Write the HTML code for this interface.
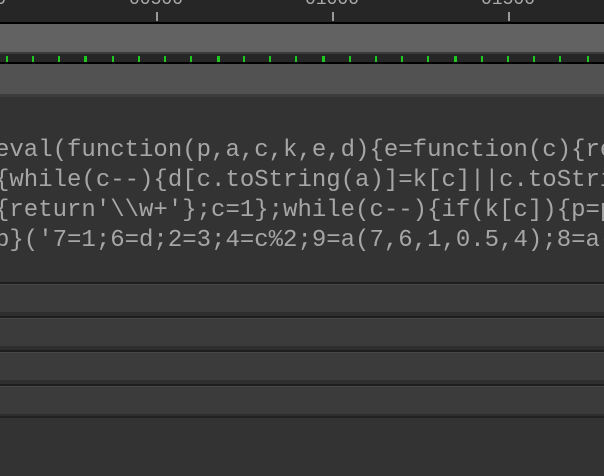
<!DOCTYPE html><html><head><style>
body{margin:0;width:604px;height:476px;overflow:hidden;background:#333;position:relative;font-family:"Liberation Mono",monospace}
div{position:absolute}
.lbl{color:#a8a8a8;font-size:18px;top:-9px;line-height:18px}
.t{width:2px;background:#9a9a9a;top:12px;height:9px}
.g{top:56px;height:6px;width:2px;background:#1ec81e}
.code{left:-5px;color:#a6a6a6;font-size:24px;line-height:30px;top:136px;white-space:pre}
.row{left:0;width:604px;height:34px}
</style></head><body>
<div style="left:0;top:0;width:604px;height:22px;background:#262626"></div>
<div class="lbl" style="left:-48px">00000</div>
<div class="lbl" style="left:129px">00500</div>
<div class="lbl" style="left:305px">01000</div>
<div class="lbl" style="left:481px">01500</div>
<div class="t" style="left:156px"></div><div class="t" style="left:332px"></div><div class="t" style="left:508px"></div>
<div style="left:0;top:22px;width:604px;height:2px;background:#000"></div>
<div style="left:0;top:24px;width:604px;height:28px;background:#626262"></div>
<div style="left:0;top:52px;width:604px;height:2px;background:#3a3a3a"></div>
<div style="left:0;top:54px;width:604px;height:8px;background:#262626"></div>
<div class="g" style="left:6px"></div><div class="g" style="left:32px"></div><div class="g" style="left:58px"></div><div class="g" style="left:84px;width:3px"></div><div class="g" style="left:112px"></div><div class="g" style="left:138px"></div><div class="g" style="left:164px"></div><div class="g" style="left:190px"></div><div class="g" style="left:217px;width:3px"></div><div class="g" style="left:243px"></div><div class="g" style="left:269px"></div><div class="g" style="left:295px"></div><div class="g" style="left:322px;width:3px"></div><div class="g" style="left:349px"></div><div class="g" style="left:375px"></div><div class="g" style="left:401px"></div><div class="g" style="left:427px"></div><div class="g" style="left:454px;width:3px"></div><div class="g" style="left:481px"></div><div class="g" style="left:507px"></div><div class="g" style="left:533px"></div><div class="g" style="left:559px"></div><div class="g" style="left:587px"></div>
<div style="left:0;top:62px;width:604px;height:2px;background:#000"></div>
<div style="left:0;top:64px;width:604px;height:30px;background:#525252"></div>
<div style="left:0;top:94px;width:604px;height:3px;background:#3c3c3c"></div>
<div class="code">eval(function(p,a,c,k,e,d){e=function(c){re
{while(c--){d[c.toString(a)]=k[c]||c.toStri
{return'\\w+'};c=1};while(c--){if(k[c]){p=p
b}('7=1;6=d;2=3;4=c%2;9=a(7,6,1,0.5,4);8=a(</div>
<div class="row" style="top:282px;background:linear-gradient(#1e1e1e 0,#1e1e1e 2px,#474747 2px,#474747 3px,#3b3b3b 3px,#3b3b3b 30px,#2e2e2e 30px)"></div>
<div class="row" style="top:316px;background:linear-gradient(#1e1e1e 0,#1e1e1e 2px,#474747 2px,#474747 3px,#3b3b3b 3px,#3b3b3b 30px,#2e2e2e 30px)"></div>
<div class="row" style="top:350px;background:linear-gradient(#1e1e1e 0,#1e1e1e 2px,#474747 2px,#474747 3px,#3b3b3b 3px,#3b3b3b 30px,#2e2e2e 30px)"></div>
<div class="row" style="top:384px;background:linear-gradient(#1e1e1e 0,#1e1e1e 2px,#474747 2px,#474747 3px,#3b3b3b 3px,#3b3b3b 30px,#2e2e2e 30px,#2e2e2e 32px,#222 32px)"></div>
</body></html>
